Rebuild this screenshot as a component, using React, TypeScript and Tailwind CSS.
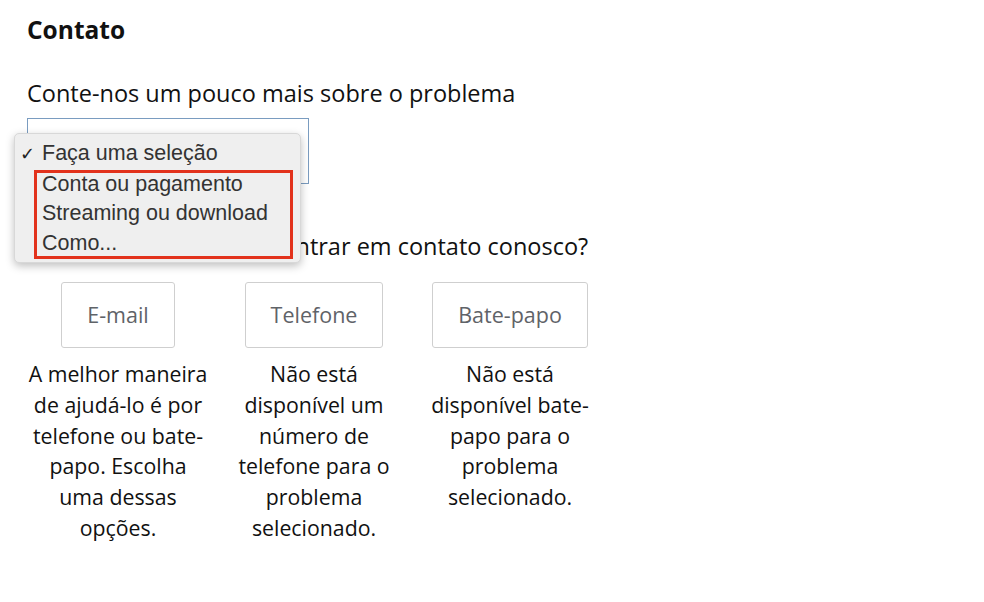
const options = [
  {
    label: "E-mail",
    lines: ["A melhor maneira", "de ajudá-lo é por", "telefone ou bate-", "papo. Escolha", "uma dessas", "opções."],
  },
  {
    label: "Telefone",
    lines: ["Não está", "disponível um", "número de", "telefone para o", "problema", "selecionado."],
  },
  {
    label: "Bate-papo",
    lines: ["Não está", "disponível bate-", "papo para o", "problema", "selecionado."],
  },
];

export default function App() {
  return (
    <div className="w-[984px] h-[602px] bg-white text-[#111] font-['Open_Sans',sans-serif] pl-[27px] pt-[14px] overflow-hidden">
      <h1 className="text-[24.5px] font-bold leading-[32px]">Contato</h1>

      <p className="mt-[31px] text-[23.5px] leading-[32px]">Conte-nos um pouco mais sobre o problema</p>

      {/* select com o menu nativo aberto */}
      <div className="relative mt-[9px] w-[282px] h-[66px] border border-[#7a9cc0] bg-white">
        <div className="absolute left-[-14px] top-[14px] w-[287px] h-[130px] z-10 bg-[#efefef] rounded-[5px] border border-[#d8d8d8] shadow-[0_3px_8px_rgba(0,0,0,0.25)] pt-[5px] font-['Liberation_Sans',Arial,sans-serif] text-[21.5px] text-[#333] leading-[29.5px]">
          <div className="flex items-baseline">
            <span className="w-[27px] pl-[5px] text-[18px] text-[#222]">✓</span>
            <span>Faça uma seleção</span>
          </div>
          <div className="pl-[27px]">Conta ou pagamento</div>
          <div className="pl-[27px]">Streaming ou download</div>
          <div className="pl-[27px]">Como...</div>
          <div className="absolute left-[19px] top-[36px] w-[259px] h-[89px] border-[3px] border-[#e2321c]" />
        </div>
      </div>

      <p className="mt-[46px] text-[23.5px] leading-[32px]">Como você gostaria de entrar em contato conosco?</p>

      <div className="mt-[20px] flex gap-[14px]">
        {options.map((o) => (
          <div key={o.label} className="w-[182px] flex flex-col items-center">
            <div className="h-[66px] px-[25px] flex items-center border border-[#cfcfcf] rounded-[3px] text-[21.5px] text-[#5f6368]">
              {o.label}
            </div>
            <div className="mt-[11px] text-center text-[21.3px] leading-[30.8px]">
              {o.lines.map((l) => (
                <div key={l} className="whitespace-nowrap">{l}</div>
              ))}
            </div>
          </div>
        ))}
      </div>
    </div>
  );
}
